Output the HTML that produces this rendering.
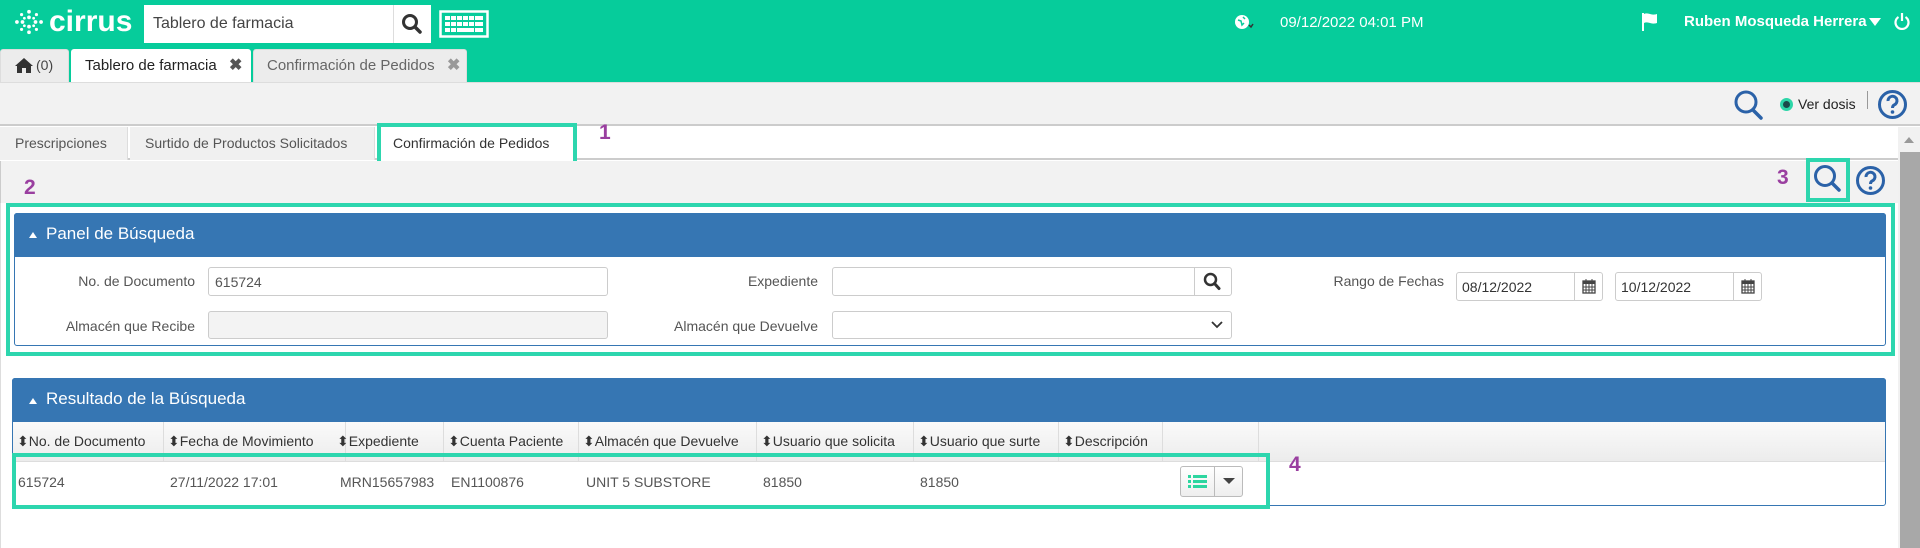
<!DOCTYPE html>
<html><head><meta charset="utf-8"><style>
*{box-sizing:border-box;margin:0;padding:0}
body{width:1920px;height:548px;overflow:hidden;background:#fff;font-family:"Liberation Sans",sans-serif;color:#333;position:relative}
.a{position:absolute}
.t{font-size:14px;color:#555;white-space:nowrap}
</style></head><body>
<!-- header -->
<div class="a" style="left:0;top:0;width:1920px;height:82px;background:#06cc9b"></div>
<svg class="a" style="left:14px;top:9px" width="30" height="26" viewBox="0 0 32 28" fill="#fff">
<circle cx="16" cy="3" r="2"/><circle cx="16" cy="9" r="2"/><circle cx="16" cy="19" r="2"/><circle cx="16" cy="25" r="2"/>
<circle cx="3" cy="14" r="2"/><circle cx="9" cy="14" r="2"/><circle cx="23" cy="14" r="2"/><circle cx="29" cy="14" r="2"/>
<circle cx="8" cy="6" r="1.7"/><circle cx="24" cy="6" r="1.7"/><circle cx="8" cy="22" r="1.7"/><circle cx="24" cy="22" r="1.7"/>
<circle cx="11" cy="10" r="1.5"/><circle cx="21" cy="10" r="1.5"/><circle cx="11" cy="18" r="1.5"/><circle cx="21" cy="18" r="1.5"/>
</svg>
<div class="a" style="left:49px;top:5px;font-size:30px;font-weight:bold;color:#fff">cirrus</div>
<div class="a" style="left:144px;top:5px;width:287px;height:38px;background:#fff"></div>
<div class="a" style="left:393px;top:5px;width:1px;height:38px;background:#ddd"></div>
<div class="a" style="left:153px;top:15px;font-size:16px;color:#444">Tablero de farmacia</div>
<svg class="a" style="left:401px;top:13px" width="22" height="22" viewBox="0 0 22 22"><circle cx="9" cy="9" r="6.5" fill="none" stroke="#333" stroke-width="3"/><path d="M14 14l5 5" stroke="#333" stroke-width="3.5" stroke-linecap="round"/></svg>
<svg class="a" style="left:439px;top:10px" width="50" height="28" viewBox="0 0 50 28"><rect x="1.5" y="1.5" width="47" height="25" fill="none" stroke="#fff" stroke-width="2.5"/>
<g fill="#fff"><rect x="6" y="6" width="38" height="4"/><rect x="6" y="12" width="38" height="4"/><rect x="6" y="18" width="38" height="4"/></g>
<g fill="#06cc9b"><rect x="11" y="6" width="1" height="16"/><rect x="17" y="6" width="1" height="16"/><rect x="23" y="6" width="1" height="12"/><rect x="29" y="6" width="1" height="12"/><rect x="35" y="6" width="1" height="16"/></g></svg>
<svg class="a" style="left:1234px;top:14px" width="20" height="18" viewBox="0 0 20 18"><circle cx="8" cy="8" r="7" fill="#fff"/><path d="M4 6l3 1 1 4 2-2M9 3l2 2" stroke="#06cc9b" stroke-width="1.5" fill="none"/><path d="M15 11l2 2 2-3" stroke="#333" stroke-width="1.5" fill="none"/></svg>
<div class="a" style="left:1280px;top:14px;font-size:15px;color:#fff">09/12/2022 04:01 PM</div>
<svg class="a" style="left:1642px;top:13px" width="16" height="18" viewBox="0 0 16 18"><path d="M1 0v18" stroke="#fff" stroke-width="2"/><path d="M2 1c4-2 7 2 13 0v9c-6 2-9-2-13 0z" fill="#fff"/></svg>
<div class="a" style="left:1684px;top:13px;font-size:15px;font-weight:bold;color:#fff">Ruben Mosqueda Herrera</div>
<div class="a" style="left:1869px;top:18px;width:0;height:0;border-left:6px solid transparent;border-right:6px solid transparent;border-top:8px solid #fff"></div>
<svg class="a" style="left:1894px;top:12px" width="16" height="18" viewBox="0 0 16 18"><path d="M4.5 5a6.5 6.5 0 1 0 7 0" fill="none" stroke="#fff" stroke-width="2.2"/><path d="M8 1v8" stroke="#fff" stroke-width="2.2"/></svg>
<!-- tabs -->
<div class="a" style="left:0;top:49px;width:69px;height:33px;background:#ececec;border:1px solid #ddd;border-bottom:none;border-radius:3px 3px 0 0"></div>
<svg class="a" style="left:15px;top:58px" width="18" height="15" viewBox="0 0 18 15"><path d="M9 0L0 8h2v7h5v-5h4v5h5V8h2z" fill="#333"/></svg>
<div class="a t" style="left:36px;top:57px;font-size:14px;color:#444">(0)</div>
<div class="a" style="left:71px;top:49px;width:180px;height:33px;background:#fff;border-radius:3px 3px 0 0"></div>
<div class="a" style="left:85px;top:57px;font-size:15px;color:#222">Tablero de farmacia</div>
<div class="a" style="left:229px;top:55px;font-size:16px;font-weight:bold;color:#555">✖</div>
<div class="a" style="left:253px;top:49px;width:214px;height:33px;background:#ececec;border:1px solid #ddd;border-bottom:none;border-radius:3px 3px 0 0"></div>
<div class="a" style="left:267px;top:57px;font-size:15px;color:#666">Confirmación de Pedidos</div>
<div class="a" style="left:447px;top:55px;font-size:16px;font-weight:bold;color:#999">✖</div>
<!-- toolbar -->
<div class="a" style="left:0;top:82px;width:1920px;height:44px;background:#f2f2f2;border-top:1px solid #ddd;border-bottom:2px solid #ccc"></div>
<svg class="a" style="left:1734px;top:90px" width="32" height="30" viewBox="0 0 32 30"><circle cx="12" cy="12" r="10" fill="none" stroke="#2b62a8" stroke-width="3"/><path d="M19 20l8 8" stroke="#2b62a8" stroke-width="3.5" stroke-linecap="round"/></svg>
<div class="a" style="left:1780px;top:98px;width:13px;height:13px;border-radius:50%;background:#1a4a4a;border:3px solid #2dd6a8"></div>
<div class="a" style="left:1798px;top:96px;font-size:14px;color:#222">Ver dosis</div>
<div class="a" style="left:1867px;top:91px;width:1px;height:18px;background:#999"></div>
<svg class="a" style="left:1877px;top:89px" width="31" height="31" viewBox="0 0 31 31"><circle cx="15.5" cy="15.5" r="13" fill="none" stroke="#2b62a8" stroke-width="3"/><path d="M11 12a4.5 4.5 0 1 1 6 4c-1.5 1-1.5 2-1.5 3" fill="none" stroke="#2b62a8" stroke-width="3"/><circle cx="15.5" cy="23" r="1.8" fill="#2b62a8"/></svg>
<!-- subtabs -->
<div class="a" style="left:0;top:127px;width:1898px;height:33px;background:#fff;border-bottom:2px solid #ccc"></div>
<div class="a" style="left:0;top:127px;width:128px;height:33px;background:#f0f0f0;border-right:1px solid #ddd"></div>
<div class="a" style="left:15px;top:135px;font-size:14px;color:#555">Prescripciones</div>
<div class="a" style="left:130px;top:127px;width:245px;height:33px;background:#f0f0f0;border-right:1px solid #ddd"></div>
<div class="a" style="left:145px;top:135px;font-size:14px;color:#555">Surtido de Productos Solicitados</div>
<div class="a" style="left:377px;top:123px;width:200px;height:42px;border:4px solid #2dd6ae;background:#fff"></div>
<div class="a" style="left:393px;top:135px;font-size:14px;color:#333">Confirmación de Pedidos</div>
<div class="a" style="left:599px;top:121px;font-size:21px;font-weight:bold;color:#9a3fa0">1</div>
<!-- scrollbar -->
<div class="a" style="left:1898px;top:127px;width:22px;height:421px;background:#f1f1f1"></div>
<div class="a" style="left:1904px;top:137px;width:0;height:0;border-left:5px solid transparent;border-right:5px solid transparent;border-bottom:6px solid #999"></div>
<div class="a" style="left:1900px;top:152px;width:20px;height:396px;background:#a8a8a8"></div>
<!-- row 2 -->
<div class="a" style="left:0;top:161px;width:1898px;height:42px;background:#f2f2f2;border-left:1px solid #ccc"></div>
<div class="a" style="left:24px;top:176px;font-size:21px;font-weight:bold;color:#9a3fa0">2</div>
<div class="a" style="left:1777px;top:166px;font-size:21px;font-weight:bold;color:#9a3fa0">3</div>
<div class="a" style="left:1806px;top:158px;width:44px;height:44px;border:4px solid #2dd6ae"></div>
<svg class="a" style="left:1813px;top:164px" width="30" height="30" viewBox="0 0 30 30"><circle cx="12" cy="12" r="9.5" fill="none" stroke="#2b62a8" stroke-width="3"/><path d="M19 19l7 7" stroke="#2b62a8" stroke-width="3.5" stroke-linecap="round"/></svg>
<svg class="a" style="left:1855px;top:165px" width="31" height="31" viewBox="0 0 31 31"><circle cx="15.5" cy="15.5" r="13" fill="none" stroke="#2b62a8" stroke-width="3"/><path d="M11 12a4.5 4.5 0 1 1 6 4c-1.5 1-1.5 2-1.5 3" fill="none" stroke="#2b62a8" stroke-width="3"/><circle cx="15.5" cy="23" r="1.8" fill="#2b62a8"/></svg>
<!-- content area -->
<div class="a" style="left:0;top:203px;width:1898px;height:345px;background:#fff;border-left:1px solid #ddd"></div>
<!-- search panel -->
<div class="a" style="left:14px;top:213px;width:1872px;height:133px;border:1px solid #3676b3;border-radius:3px;background:#fff"></div>
<div class="a" style="left:14px;top:213px;width:1872px;height:44px;background:#3676b3;border-radius:3px 3px 0 0"></div>
<div class="a" style="left:29px;top:232px;width:0;height:0;border-left:4px solid transparent;border-right:4px solid transparent;border-bottom:6px solid #fff"></div>
<div class="a" style="left:46px;top:224px;font-size:17px;color:#fff">Panel de Búsqueda</div>
<div class="a" style="left:6px;top:203px;width:1889px;height:153px;border:4px solid #2dd6ae"></div>
<div class="a t" style="left:60px;top:273px;width:135px;text-align:right">No. de Documento</div>
<div class="a" style="left:208px;top:267px;width:400px;height:29px;border:1px solid #ccc;border-radius:3px"></div>
<div class="a t" style="left:215px;top:274px">615724</div>
<div class="a t" style="left:40px;top:318px;width:155px;text-align:right">Almacén que Recibe</div>
<div class="a" style="left:208px;top:311px;width:400px;height:28px;border:1px solid #ccc;border-radius:3px;background:#f3f3f3"></div>
<div class="a t" style="left:700px;top:273px;width:118px;text-align:right">Expediente</div>
<div class="a" style="left:832px;top:267px;width:400px;height:29px;border:1px solid #ccc;border-radius:3px"></div>
<div class="a" style="left:1194px;top:267px;width:1px;height:29px;background:#ccc"></div>
<svg class="a" style="left:1203px;top:272px" width="18" height="19" viewBox="0 0 18 19"><circle cx="7.5" cy="7.5" r="5.5" fill="none" stroke="#333" stroke-width="2.5"/><path d="M11.5 11.5l4.5 5" stroke="#333" stroke-width="3" stroke-linecap="round"/></svg>
<div class="a t" style="left:640px;top:318px;width:178px;text-align:right">Almacén que Devuelve</div>
<div class="a" style="left:832px;top:311px;width:400px;height:28px;border:1px solid #ccc;border-radius:3px"></div>
<svg class="a" style="left:1211px;top:320px" width="12" height="9" viewBox="0 0 12 9"><path d="M1 2l5 5 5-5" fill="none" stroke="#333" stroke-width="1.8"/></svg>
<div class="a t" style="left:1300px;top:273px;width:144px;text-align:right">Rango de Fechas</div>
<div class="a" style="left:1456px;top:272px;width:147px;height:29px;border:1px solid #ccc;border-radius:3px"></div>
<div class="a" style="left:1574px;top:272px;width:1px;height:29px;background:#ccc"></div>
<div class="a t" style="left:1462px;top:279px;color:#333">08/12/2022</div>
<div class="a" style="left:1615px;top:272px;width:147px;height:29px;border:1px solid #ccc;border-radius:3px"></div>
<div class="a" style="left:1733px;top:272px;width:1px;height:29px;background:#ccc"></div>
<div class="a t" style="left:1621px;top:279px;color:#333">10/12/2022</div>
<svg class="a" style="left:1582px;top:278px" width="14" height="16" viewBox="0 0 14 16"><rect x="1" y="3" width="12" height="12" fill="none" stroke="#444" stroke-width="1.3"/><rect x="1" y="3" width="12" height="3" fill="#444"/><path d="M4 1v4M10 1v4M1 9h12M1 12h12M4 6v9M7 6v9M10 6v9" stroke="#444" stroke-width="1"/></svg>
<svg class="a" style="left:1741px;top:278px" width="14" height="16" viewBox="0 0 14 16"><rect x="1" y="3" width="12" height="12" fill="none" stroke="#444" stroke-width="1.3"/><rect x="1" y="3" width="12" height="3" fill="#444"/><path d="M4 1v4M10 1v4M1 9h12M1 12h12M4 6v9M7 6v9M10 6v9" stroke="#444" stroke-width="1"/></svg>
<!-- results panel -->
<div class="a" style="left:12px;top:378px;width:1874px;height:128px;border:1px solid #3676b3;border-radius:3px;background:#fff"></div>
<div class="a" style="left:12px;top:378px;width:1874px;height:44px;background:#3676b3;border-radius:3px 3px 0 0"></div>
<div class="a" style="left:29px;top:398px;width:0;height:0;border-left:4px solid transparent;border-right:4px solid transparent;border-bottom:6px solid #fff"></div>
<div class="a" style="left:46px;top:389px;font-size:17px;color:#fff">Resultado de la Búsqueda</div>
<div class="a" style="left:13px;top:422px;width:1872px;height:40px;background:linear-gradient(#fafafa,#ececec);border-bottom:1px solid #ddd"></div>
<div class="a" style="left:13px;top:422px;width:1248px;height:40px;font-size:14px;color:#333">
<div class="a" style="left:0;width:151px;height:40px;border-right:1px solid #ddd"></div>
<div class="a" style="left:151px;width:182px;height:40px;border-right:1px solid #ddd"></div>
<div class="a" style="left:320px;width:111px;height:40px;border-right:1px solid #ddd"></div>
<div class="a" style="left:431px;width:135px;height:40px;border-right:1px solid #ddd"></div>
<div class="a" style="left:566px;width:178px;height:40px;border-right:1px solid #ddd"></div>
<div class="a" style="left:744px;width:157px;height:40px;border-right:1px solid #ddd"></div>
<div class="a" style="left:901px;width:145px;height:40px;border-right:1px solid #ddd"></div>
<div class="a" style="left:1046px;width:104px;height:40px;border-right:1px solid #ddd"></div>
<div class="a" style="left:1150px;width:96px;height:40px;border-right:1px solid #ddd"></div>
</div>
<div class="a" style="left:17px;top:433px;font-size:14px;color:#333;white-space:nowrap">
<span class="a" style="left:0">⬍No. de Documento</span>
<span class="a" style="left:151px">⬍Fecha de Movimiento</span>
<span class="a" style="left:320px">⬍Expediente</span>
<span class="a" style="left:431px">⬍Cuenta Paciente</span>
<span class="a" style="left:566px">⬍Almacén que Devuelve</span>
<span class="a" style="left:744px">⬍Usuario que solicita</span>
<span class="a" style="left:901px">⬍Usuario que surte</span>
<span class="a" style="left:1046px">⬍Descripción</span>
</div>
<div class="a" style="left:13px;top:474px;font-size:14px;color:#555;white-space:nowrap">
<span class="a" style="left:5px">615724</span>
<span class="a" style="left:157px">27/11/2022 17:01</span>
<span class="a" style="left:327px">MRN15657983</span>
<span class="a" style="left:438px">EN1100876</span>
<span class="a" style="left:573px">UNIT 5 SUBSTORE</span>
<span class="a" style="left:750px">81850</span>
<span class="a" style="left:907px">81850</span>
</div>
<div class="a" style="left:1180px;top:466px;width:63px;height:31px;border:1px solid #bbb;border-radius:3px;background:linear-gradient(#fff,#eee)"></div>
<div class="a" style="left:1214px;top:466px;width:1px;height:31px;background:#bbb"></div>
<svg class="a" style="left:1188px;top:474px" width="19" height="15" viewBox="0 0 19 15" fill="#2dd6a0"><rect x="0" y="1" width="3" height="3"/><rect x="0" y="6" width="3" height="3"/><rect x="0" y="11" width="3" height="3"/><rect x="5" y="1" width="14" height="3"/><rect x="5" y="6" width="14" height="3"/><rect x="5" y="11" width="14" height="3"/></svg>
<div class="a" style="left:1223px;top:478px;width:0;height:0;border-left:6px solid transparent;border-right:6px solid transparent;border-top:6px solid #444"></div>
<div class="a" style="left:12px;top:453px;width:1258px;height:56px;border:4px solid #2dd6ae"></div>
<div class="a" style="left:1289px;top:453px;font-size:21px;font-weight:bold;color:#9a3fa0">4</div>
</body></html>
